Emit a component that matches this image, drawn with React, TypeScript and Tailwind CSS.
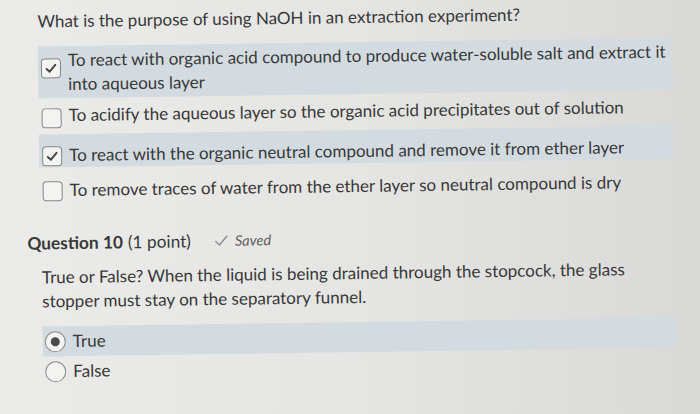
import React from "react";

const Check = () => (
  <svg width="14" height="14" viewBox="0 0 14 14" fill="none">
    <path d="M2.6 7.6 L5.6 10.4 L11.4 3.6" stroke="#454545" strokeWidth="2" strokeLinecap="round" strokeLinejoin="round" />
  </svg>
);

const Box = ({ checked }: { checked?: boolean }) => (
  <span className="w-[20px] h-[20px] shrink-0 rounded-[4px] border-[1.5px] border-[#858585] bg-[#f3f3f2] flex items-center justify-center">
    {checked && <Check />}
  </span>
);

const Radio = ({ checked }: { checked?: boolean }) => (
  <span className="w-[21px] h-[21px] shrink-0 rounded-full border-[1.5px] border-[#858585] bg-[#f3f3f2] flex items-center justify-center">
    {checked && <span className="w-[9px] h-[9px] rounded-full bg-[#4a4a4a]" />}
  </span>
);

export default function App() {
  return (
    <div className="w-[700px] h-[414px] overflow-hidden bg-gradient-to-r from-[#ebebe9] via-[#e5e5e3] to-[#d9d9d8]">
      <div
        className="w-[700px] -rotate-[0.8deg] origin-top-left text-[#383838] text-[17px] leading-[24px]"
        style={{ fontFamily: "Lato, 'Open Sans', sans-serif" }}
      >
        <div className="pl-[37px] pt-[10px]">
          What is the purpose of using NaOH in an extraction experiment?
        </div>

        <div className="ml-[37px] w-[634px] mt-[13px] flex flex-col">
          <div className="bg-[#d3dbe0] flex items-start gap-[7px] pl-[3px] py-[2px] h-[52px]">
            <span className="mt-[10px]"><Box checked /></span>
            <div>
              To react with organic acid compound to produce water-soluble salt and extract it
              <br />
              into aqueous layer
            </div>
          </div>
          <div className="flex items-start gap-[7px] pl-[3px] mt-[5px] h-[30px]">
            <span className="mt-[5px]"><Box /></span>
            <span>To acidify the aqueous layer so the organic acid precipitates out of solution</span>
          </div>
          <div className="bg-[#d3dbe0] flex items-start gap-[7px] pl-[3px] pt-[9px] mt-[1px] h-[33px]">
            <span className="mt-[3px]"><Box checked /></span>
            <span>To react with the organic neutral compound and remove it from ether layer</span>
          </div>
          <div className="flex items-start gap-[7px] pl-[3px] pt-[11px] h-[35px]">
            <span className="mt-[3px]"><Box /></span>
            <span>To remove traces of water from the ether layer so neutral compound is dry</span>
          </div>
        </div>

        <div className="pl-[24px] mt-[29px] flex items-center h-[24px]">
          <span className="text-[17.3px] font-bold">Question 10</span>
          <span className="text-[17.3px] ml-[5px]">(1 point)</span>
          <span className="ml-[23px] flex items-center gap-[7px] text-[14.5px] italic text-[#606060]">
            <svg width="14" height="12" viewBox="0 0 14 12" fill="none">
              <path d="M1.5 6.5 L5 10 L12.5 1.5" stroke="#909090" strokeWidth="1.5" strokeLinecap="round" strokeLinejoin="round" />
            </svg>
            Saved
          </span>
        </div>

        <div className="pl-[38px] mt-[10px]">
          True or False? When the liquid is being drained through the stopcock, the glass
          <br />
          stopper must stay on the separatory funnel.
        </div>

        <div className="ml-[38px] w-[633px] mt-[13px] flex flex-col">
          <div className="bg-[#d3dbe0] flex items-center gap-[7px] pl-[2px] h-[30px]">
            <Radio checked />
            <span>True</span>
          </div>
          <div className="flex items-center gap-[7px] pl-[2px] h-[30px]">
            <Radio />
            <span>False</span>
          </div>
        </div>
      </div>
    </div>
  );
}
